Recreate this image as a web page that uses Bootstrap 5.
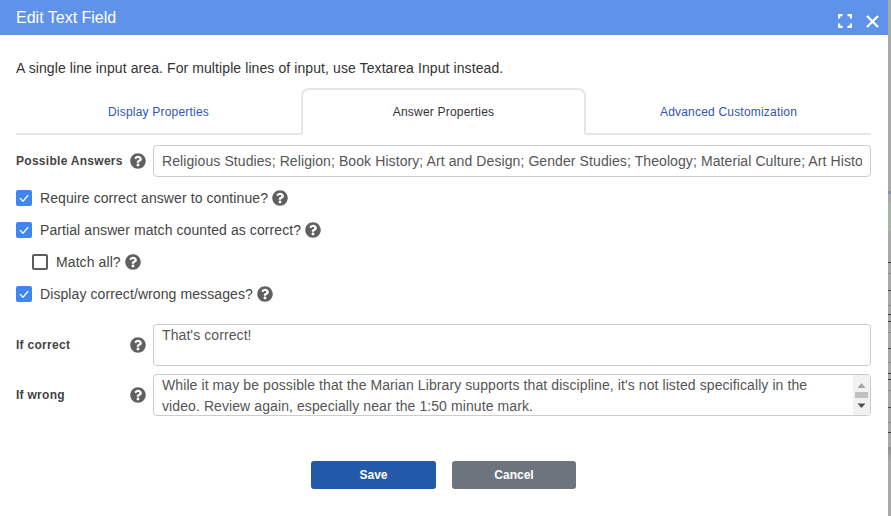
<!DOCTYPE html>
<html lang="en">
<head>
<meta charset="utf-8">
<title>Edit Text Field</title>
<link href="https://cdn.jsdelivr.net/npm/bootstrap@5.3.0/dist/css/bootstrap.min.css" rel="stylesheet">
<style>
html,body{height:516px;overflow:hidden;}
body{font-family:"Liberation Sans",Arial,sans-serif;color:#444;font-size:14px;letter-spacing:.09px;
  background:
    linear-gradient(#3b3b3b,#3b3b3b) 0 262px/100% 1px no-repeat,
    linear-gradient(#8b8b8b,#8b8b8b) 0 273px/100% 1px no-repeat,
    linear-gradient(#4a4a4a,#4a4a4a) 2px 290px/100% 1px no-repeat,
    linear-gradient(#8b8b8b,#8b8b8b) 0 305px/100% 1px no-repeat,
    linear-gradient(#3b3b3b,#3b3b3b) 0 314px/100% 1px no-repeat,
    linear-gradient(#3b3b3b,#3b3b3b) 0 321px/100% 1px no-repeat,
    linear-gradient(#8b8b8b,#8b8b8b) 0 332px/100% 1px no-repeat,
    linear-gradient(#4a4a4a,#4a4a4a) 2px 348px/100% 1px no-repeat,
    linear-gradient(#8b8b8b,#8b8b8b) 0 362px/100% 1px no-repeat,
    linear-gradient(#3b3b3b,#3b3b3b) 0 373px/100% 1px no-repeat,
    linear-gradient(#3b3b3b,#3b3b3b) 0 379px/100% 1px no-repeat,
    linear-gradient(#8b8b8b,#8b8b8b) 0 390px/100% 1px no-repeat,
    linear-gradient(#4a4a4a,#4a4a4a) 2px 407px/100% 1px no-repeat,
    linear-gradient(#8b8b8b,#8b8b8b) 0 422px/100% 1px no-repeat,
    linear-gradient(#3b3b3b,#3b3b3b) 0 432px/100% 1px no-repeat,
    linear-gradient(#909090,#a8a8a8) 0 447px/100% 14px no-repeat,
    linear-gradient(#a8b4a4,#a8b4a4) 0 203px/100% 28px no-repeat,
    linear-gradient(#7f8fb5,#7f8fb5) 0 191px/100% 3px no-repeat,
    #a9a9a9;
}
.dlg{width:888px;height:516px;background:#fff;border:0;border-radius:0;}
.dlg-head{height:35px;background:#5f93ea;color:#fff;padding:0 9px 0 16px;border:0;border-radius:0;}
.dlg-title{font-size:16px;line-height:35px;margin:0;font-weight:400;padding-bottom:1px;letter-spacing:0;}
.dlg-tools{padding-top:7px;gap:14px;}
.dlg-tools svg{display:block;}
.dlg-body{padding:0 17px 0 16px;flex:none;}
.intro{line-height:20px;color:#333;margin:23px 0 10px;}
.tabbar{--bs-nav-tabs-border-width:2px;--bs-nav-tabs-border-color:#e6e6e6;--bs-nav-tabs-border-radius:8px;--bs-nav-tabs-link-active-color:#333;--bs-nav-tabs-link-active-bg:#fff;--bs-nav-tabs-link-active-border-color:#e6e6e6 #e6e6e6 #fff;--bs-nav-tabs-link-hover-border-color:transparent;height:47px;}
.tabbar .nav-link{height:47px;padding:0;font-size:12px;line-height:44px;color:#2f55b5;letter-spacing:.2px;}
.tabbar .nav-link.active{color:#333;}
.line{display:flex;align-items:center;}
.lbl{font-size:12px;font-weight:700;color:#444;letter-spacing:.28px;width:114px;flex:none;margin:0;}
.qi{width:16px;height:16px;flex:none;display:block;fill:#606060;}
.fld{flex:1;min-width:0;margin-left:7px;border:1px solid #ccc;border-radius:4px;font-size:14px;color:#555;background:#fff;padding:0 8px;letter-spacing:.09px;box-shadow:none;}
.r1{margin-top:10px;height:32px;}
.r1 .fld{height:32px;}
.chks{margin-top:5px;}
.chk{height:32px;min-height:0;color:#444;margin:0;padding:0;}
.chk .tick{width:16px;height:16px;margin:0 8px 0 0;float:none;flex:none;border:0;border-radius:2px;background-color:#3f86ef;background-image:url("data:image/svg+xml,%3Csvg xmlns='http://www.w3.org/2000/svg' viewBox='0 0 16 16'%3E%3Cpath d='M4 8.2l3 3 5.2-6' fill='none' stroke='%23fff' stroke-width='1.3'/%3E%3C/svg%3E");background-size:16px;}
.chk .tick:not(:checked){background-color:#fff;background-image:none;border:2px solid #5c5c5c;}
.chk .qi{margin-left:4px;}
.chk.ind{padding-left:16px;}
.rc{height:42px;margin-top:14px;}
.rw{height:42px;margin-top:8px;}
.area{height:42px;min-height:0;line-height:21px;padding:0 8px;resize:none;overflow:hidden;}
.rc .area{line-height:20px;}
.rw .area{padding-right:30px;}
.areawrap{flex:1;min-width:0;position:relative;margin-left:7px;height:42px;}
.areawrap .area{margin:0;width:100%;}
.sbar{position:absolute;right:1px;top:1px;width:17px;height:40px;background:#f1f1f1;border-radius:0 3px 3px 0;display:block;}
.acts{margin-top:45px;gap:16px;}
.act{height:28px;border:0;border-radius:3px;padding:0;font-size:12px;font-weight:700;color:#fff;line-height:28px;letter-spacing:0;}
.act-s{width:125px;background:#2259a8;}
.act-c{width:124px;background:#6c757d;}
</style>
</head>
<body>
<svg width="0" height="0" class="position-absolute"><defs>
<symbol id="qm" viewBox="0 0 512 512"><path d="M504 256c0 136.997-111.043 248-248 248S8 392.997 8 256C8 119.083 119.043 8 256 8s248 111.083 248 248zM262.655 90c-54.497 0-89.255 22.957-116.549 63.758-3.536 5.286-2.353 12.415 2.715 16.258l34.699 26.31c5.205 3.947 12.621 3.008 16.665-2.122 17.864-22.658 30.113-35.797 57.303-35.797 20.429 0 45.698 13.148 45.698 32.958 0 14.976-12.363 22.667-32.534 33.976C247.128 238.528 216 254.941 216 296v4c0 6.627 5.373 12 12 12h56c6.627 0 12-5.373 12-12v-1.333c0-28.462 83.186-29.647 83.186-106.667 0-58.002-60.165-102-116.531-102zM256 338c-25.365 0-46 20.635-46 46 0 25.364 20.635 46 46 46s46-20.636 46-46c0-25.365-20.635-46-46-46z"/></symbol>
</defs></svg>
<div class="modal-content dlg">
  <div class="modal-header dlg-head d-flex justify-content-between align-items-center">
    <h5 class="modal-title dlg-title">Edit Text Field</h5>
    <div class="dlg-tools d-flex align-items-center">
      <svg width="14" height="14" viewBox="0 0 14 14" fill="none" stroke="#fff" stroke-width="2.2"><path d="M1.100 4.500V1.100h3.400M9.500 1.100h3.400v3.400M12.900 9.500v3.400H9.500M4.500 12.900H1.100V9.500"/></svg>
      <svg width="13" height="13" viewBox="0 0 13 13" fill="none" stroke="#fff" stroke-width="2.4"><path d="M1 1l11 11M12 1L1 12"/></svg>
    </div>
  </div>
  <div class="dlg-body">
    <p class="intro">A single line input area. For multiple lines of input, use Textarea Input instead.</p>
    <ul class="nav nav-tabs nav-justified tabbar">
      <li class="nav-item"><a class="nav-link" href="#">Display Properties</a></li>
      <li class="nav-item"><a class="nav-link active" href="#">Answer Properties</a></li>
      <li class="nav-item"><a class="nav-link" href="#">Advanced Customization</a></li>
    </ul>
    <div class="line r1">
      <label class="lbl form-label" for="ans">Possible Answers</label>
      <svg class="qi"><use href="#qm"/></svg>
      <input id="ans" class="form-control fld" type="text" value="Religious Studies; Religion; Book History; Art and Design; Gender Studies; Theology; Material Culture; Art History">
    </div>
    <div class="chks">
      <div class="form-check line chk"><input class="form-check-input tick" type="checkbox" checked id="c1"><label for="c1">Require correct answer to continue?</label><svg class="qi"><use href="#qm"/></svg></div>
      <div class="form-check line chk"><input class="form-check-input tick" type="checkbox" checked id="c2"><label for="c2">Partial answer match counted as correct?</label><svg class="qi"><use href="#qm"/></svg></div>
      <div class="form-check line chk ind"><input class="form-check-input tick" type="checkbox" id="c3"><label for="c3">Match all?</label><svg class="qi"><use href="#qm"/></svg></div>
      <div class="form-check line chk"><input class="form-check-input tick" type="checkbox" checked id="c4"><label for="c4">Display correct/wrong messages?</label><svg class="qi"><use href="#qm"/></svg></div>
    </div>
    <div>
      <div class="line rc">
        <label class="lbl form-label" for="tc">If correct</label>
        <svg class="qi"><use href="#qm"/></svg>
        <div class="areawrap"><textarea id="tc" class="form-control fld area" rows="2">That's correct!</textarea></div>
      </div>
      <div class="line rw">
        <label class="lbl form-label" for="tw">If wrong</label>
        <svg class="qi"><use href="#qm"/></svg>
        <div class="areawrap">
          <textarea id="tw" class="form-control fld area" rows="2">While it may be possible that the Marian Library supports that discipline, it's not listed specifically in the video. Review again, especially near the 1:50 minute mark.</textarea>
          <svg class="sbar" width="17" height="40" viewBox="0 0 17 40"><path d="M4.500 13l4-5 4 5z" fill="#a3a3a3"/><rect x="2" y="17" width="13" height="6" fill="#c1c1c1"/><path d="M4.500 28.500l4 4.500 4-4.500z" fill="#505050"/></svg>
        </div>
      </div>
    </div>
    <div class="acts d-flex justify-content-center">
      <button type="button" class="btn act act-s">Save</button>
      <button type="button" class="btn act act-c">Cancel</button>
    </div>
  </div>
</div>
</body>
</html>
